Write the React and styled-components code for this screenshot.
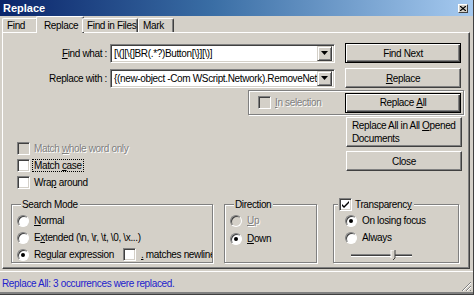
import React from "react";
import styled, { createGlobalStyle } from "styled-components";

const Global = createGlobalStyle`
  html, body { margin: 0; padding: 0; background: #d4d0c8; }
  body {
    font-family: "Liberation Sans", Arial, sans-serif;
    font-size: 10px;
    letter-spacing: -0.35px;
    color: #000;
  }
  * { box-sizing: border-box; }
`;

const Window = styled.div`
  width: 474px;
  height: 295px;
  display: flex;
  flex-direction: column;
  background: #d4d0c8;
  border-right: 1px solid #404040;
  border-bottom: 1px solid #404040;
  overflow: hidden;
`;

const TitleBar = styled.div`
  height: 16px;
  display: flex;
  align-items: center;
  justify-content: space-between;
  padding: 0 5px 0 3px;
  background: linear-gradient(to right, #0a246a 0%, #3a6ea5 45%, #a6caf0 100%);
`;

const Title = styled.span`
  color: #fff;
  font-weight: bold;
  font-size: 11px;
  letter-spacing: 0;
`;

const CloseBox = styled.div`
  width: 10px;
  height: 9px;
  background: #d4d0c8;
  border: 1px solid;
  border-color: #fff #404040 #404040 #fff;
  display: flex;
  align-items: center;
  justify-content: center;
`;

const TabStrip = styled.div`
  height: 16px;
  display: flex;
  align-items: flex-end;
  padding-left: 2px;
  position: relative;
  z-index: 2;
`;

const Tab = styled.div`
  width: ${(p) => p.$w}px;
  height: ${(p) => (p.$active ? 17 : 14)}px;
  margin: ${(p) => (p.$active ? "0 -2px -1px -2px" : "0")};
  padding-left: ${(p) => (p.$active ? 7 : 4)}px;
  padding-top: ${(p) => (p.$active ? 1 : 0)}px;
  display: flex;
  align-items: center;
  background: #d4d0c8;
  border: 1px solid;
  border-bottom: none;
  border-color: #fff #404040 #fff #fff;
  border-radius: 2px 2px 0 0;
  box-shadow: inset -1px 0 0 #808080;
  white-space: nowrap;
`;

const Page = styled.div`
  height: 237px;
  margin: 0 3px 0 2px;
  border: 1px solid;
  border-color: #fff #404040 #404040 #fff;
  box-shadow: inset -1px -1px 0 #808080;
  padding-top: 10px;
  display: flex;
  flex-direction: column;
`;

const FieldRow = styled.div`
  display: flex;
  align-items: center;
  height: 20px;
  margin-bottom: ${(p) => p.$mb || 0}px;
`;

const FieldLabel = styled.div`
  width: 104px;
  margin-right: 3px;
  text-align: right;
  white-space: nowrap;
`;

const Combo = styled.div`
  width: 225px;
  height: 19px;
  margin-right: 10px;
  display: flex;
  align-items: center;
  background: #fff;
  border: 1px solid;
  border-color: #808080 #fff #fff #808080;
  box-shadow: inset 1px 1px 0 #404040, inset -1px -1px 0 #d4d0c8;
  padding: 2px 2px 2px 3px;
`;

const ComboText = styled.div`
  flex: 1;
  overflow: hidden;
  white-space: nowrap;
  line-height: 13px;
`;

const DropButton = styled.div`
  width: 15px;
  height: 15px;
  flex: none;
  background: #d4d0c8;
  border: 1px solid;
  border-color: #d4d0c8 #404040 #404040 #d4d0c8;
  box-shadow: inset 1px 1px 0 #fff, inset -1px -1px 0 #808080;
  display: flex;
  align-items: center;
  justify-content: center;
`;

const Button = styled.div`
  width: 116px;
  height: ${(p) => p.$h || 20}px;
  flex: none;
  display: flex;
  align-items: center;
  justify-content: ${(p) => (p.$left ? "flex-start" : "center")};
  padding: ${(p) => (p.$left ? "0 3px 0 5px" : "0")};
  line-height: 13px;
  background: #d4d0c8;
  border: 1px solid;
  border-color: ${(p) => (p.$default ? "#000" : "#fff #404040 #404040 #fff")};
  box-shadow: ${(p) =>
    p.$default
      ? "inset 1px 1px 0 #fff, inset -1px -1px 0 #404040, inset -2px -2px 0 #808080"
      : "inset -1px -1px 0 #808080"};
`;

const SelectionBox = styled.div`
  width: 216px;
  height: 25px;
  margin: 2px 0 0 245px;
  display: flex;
  align-items: center;
  justify-content: space-between;
  padding: 0 2px 0 9px;
  border: 1px solid #808080;
  box-shadow: inset 1px 1px 0 #fff, 1px 1px 0 #fff;
`;

const Middle = styled.div`
  display: flex;
  margin-top: 2px;
  height: 72px;
`;

const OptionColumn = styled.div`
  flex: 1;
  display: flex;
  flex-direction: column;
  gap: 4px;
  padding: 25px 0 0 14px;
`;

const ButtonStack = styled.div`
  display: flex;
  flex-direction: column;
  gap: 4px;
  margin-right: 7px;
`;

const Option = styled.div`
  display: flex;
  align-items: center;
  height: 13px;
  gap: ${(p) => p.$gap ?? 4}px;
  white-space: nowrap;
  color: ${(p) => (p.$disabled ? "#808080" : "#000")};
  text-shadow: ${(p) => (p.$disabled ? "1px 1px 0 #fff" : "none")};
`;

const Box = styled.div`
  width: 13px;
  height: 13px;
  flex: none;
  background: ${(p) => (p.$disabled ? "#d4d0c8" : "#fff")};
  border: 1px solid;
  border-color: #808080 #fff #fff #808080;
  box-shadow: inset 1px 1px 0 #404040, inset -1px -1px 0 #d4d0c8;
  display: flex;
  align-items: center;
  justify-content: center;
`;

const Circle = styled.div`
  width: 12px;
  height: 12px;
  flex: none;
  border-radius: 50%;
  background: ${(p) => (p.$disabled ? "#d4d0c8" : "#fff")};
  border: 1px solid;
  border-color: #808080 #fff #fff #808080;
  box-shadow: inset 1px 1px 0 #404040;
  display: flex;
  align-items: center;
  justify-content: center;
  &::after {
    content: "";
    width: 4px;
    height: 4px;
    border-radius: 50%;
    background: ${(p) => (p.$checked ? "#000" : "transparent")};
  }
`;

const Focus = styled.span`
  outline: 1px dotted #000;
  outline-offset: 0;
  padding: 0 1px;
  margin-left: -1px;
`;

const Groups = styled.div`
  display: flex;
  margin: 9px 0 0 8px;
`;

const Group = styled.fieldset`
  width: ${(p) => p.$w}px;
  height: 65px;
  margin: 0 0 0 ${(p) => p.$ml || 0}px;
  padding: 3px 0 0 ${(p) => p.$pl}px;
  min-width: 0;
  border: 1px solid #808080;
  box-shadow: inset 1px 1px 0 #fff, 1px 1px 0 #fff;
  display: flex;
  flex-direction: column;
  gap: ${(p) => p.$gap || 4}px;
`;

const Legend = styled.legend`
  margin-left: ${(p) => p.$ml}px;
  padding: 0 2px 0 1px;
  background: #d4d0c8;
  line-height: 13px;
  display: flex;
  align-items: center;
  gap: 3px;
`;

const Clip = styled.span`
  width: ${(p) => p.$w}px;
  overflow: hidden;
  white-space: nowrap;
`;

const SliderWrap = styled.div`
  margin: 2px 0 0 6px;
  height: 10px;
  display: flex;
`;

const StatusBar = styled.div`
  flex: 1;
  margin-top: 2px;
  display: flex;
  align-items: center;
  justify-content: space-between;
  padding: 2px 1px 0 2px;
  border-top: 1px solid #fff;
  border-bottom: 2px solid #808080;
`;

const StatusText = styled.span`
  color: #2222cc;
`;

const Grip = styled.div`
  align-self: flex-end;
  height: 11px;
  width: 11px;
  display: flex;
`;

function Check({ checked, disabled }) {
  return (
    <Box $disabled={disabled}>
      {checked && (
        <svg width="7" height="7" viewBox="0 0 7 7">
          <path d="M0 3 L2 5 L7 0 L7 2 L2 7 L0 5 Z" fill="#000" />
        </svg>
      )}
    </Box>
  );
}

function CheckOption({ checked, disabled, children, gap }) {
  return (
    <Option $disabled={disabled} $gap={gap}>
      <Check checked={checked} disabled={disabled} />
      <span>{children}</span>
    </Option>
  );
}

function RadioOption({ checked, disabled, children }) {
  return (
    <Option $disabled={disabled} $gap={5}>
      <Circle $checked={checked} $disabled={disabled} />
      <span>{children}</span>
    </Option>
  );
}

function Arrow() {
  return (
    <svg width="7" height="4" viewBox="0 0 7 4">
      <path d="M0 0 H7 L3.5 4 Z" fill="#000" />
    </svg>
  );
}

export default function App() {
  return (
    <>
      <Global />
      <Window>
        <TitleBar>
          <Title>Replace</Title>
          <CloseBox>
            <svg width="6" height="5" viewBox="0 0 6 5">
              <path d="M0 0 L6 5 M6 0 L0 5" stroke="#000" strokeWidth="1.2" />
            </svg>
          </CloseBox>
        </TitleBar>
        <TabStrip>
          <Tab $w={36}>Find</Tab>
          <Tab $w={48} $active>Replace</Tab>
          <Tab $w={56}>Find in Files</Tab>
          <Tab $w={36}>Mark</Tab>
        </TabStrip>
        <Page>
          <FieldRow $mb={5}>
            <FieldLabel>
              <u>F</u>ind what :
            </FieldLabel>
            <Combo>
              <ComboText>[\(][\{"{"}]BR(.*?)Button[\{"}"}][\)]</ComboText>
              <DropButton>
                <Arrow />
              </DropButton>
            </Combo>
            <Button $default>Find Next</Button>
          </FieldRow>
          <FieldRow>
            <FieldLabel>Replace with :</FieldLabel>
            <Combo>
              <ComboText>
                {"{(new-object -Com WScript.Network).RemoveNetworkDrive"}
              </ComboText>
              <DropButton>
                <Arrow />
              </DropButton>
            </Combo>
            <Button>
              <u>R</u>eplace
            </Button>
          </FieldRow>
          <SelectionBox>
            <CheckOption disabled>
              <u>I</u>n selection
            </CheckOption>
            <Button $default>
              Replace&nbsp;<u>A</u>ll
            </Button>
          </SelectionBox>
          <Middle>
            <OptionColumn>
              <CheckOption disabled>
                Match <u>w</u>hole word only
              </CheckOption>
              <CheckOption>
                <Focus>
                  Match <u>c</u>ase
                </Focus>
              </CheckOption>
              <CheckOption>
                Wra<u>p</u> around
              </CheckOption>
            </OptionColumn>
            <ButtonStack>
              <Button $h={30} $left>
                <span>
                  Replace All in All <u>O</u>pened Documents
                </span>
              </Button>
              <Button>Close</Button>
            </ButtonStack>
          </Middle>
          <Groups>
            <Group $w={202} $pl={5}>
              <Legend $ml={4}>Search Mode</Legend>
              <RadioOption>
                <u>N</u>ormal
              </RadioOption>
              <RadioOption>
                E<u>x</u>tended (\n, \r, \t, \0, \x...)
              </RadioOption>
              <Option $gap={5}>
                <Circle $checked />
                <span style={{ width: 84 }}>
                  Re<u>g</u>ular expression
                </span>
                <Check />
                <Clip $w={71}>
                  <u>.</u> matches newline
                </Clip>
              </Option>
            </Group>
            <Group $w={93} $ml={11} $pl={5} $gap={5}>
              <Legend $ml={4}>Direction</Legend>
              <RadioOption disabled>
                <u>U</u>p
              </RadioOption>
              <RadioOption checked>
                <u>D</u>own
              </RadioOption>
            </Group>
            <Group $w={126} $ml={16} $pl={11}>
              <Legend $ml={-7}>
                <Check checked />
                <span>
                  Transparenc<u>y</u>
                </span>
              </Legend>
              <RadioOption checked>On losing focus</RadioOption>
              <RadioOption>Always</RadioOption>
              <SliderWrap>
                <svg width="62" height="10" viewBox="0 0 62 10">
                  <rect x="0" y="4" width="61" height="1" fill="#808080" />
                  <rect x="0" y="5" width="61" height="1" fill="#404040" />
                  <rect x="0" y="6" width="61" height="1" fill="#fff" />
                  <path d="M40 0 H44 V8 L42 10 L40 8 Z" fill="#d4d0c8" />
                  <path d="M40 8 V0 H44" stroke="#fff" fill="none" />
                  <path d="M44 0 V8 L42 10" stroke="#404040" fill="none" />
                </svg>
              </SliderWrap>
            </Group>
          </Groups>
        </Page>
        <StatusBar>
          <StatusText>Replace All: 3 occurrences were replaced.</StatusText>
          <Grip>
            <svg width="11" height="11" viewBox="0 0 11 11">
              <path d="M10 1 L1 10 M10 5 L5 10 M10 9 L9 10" stroke="#808080" />
              <path d="M10 2 L2 10 M10 6 L6 10" stroke="#fff" />
            </svg>
          </Grip>
        </StatusBar>
      </Window>
    </>
  );
}
